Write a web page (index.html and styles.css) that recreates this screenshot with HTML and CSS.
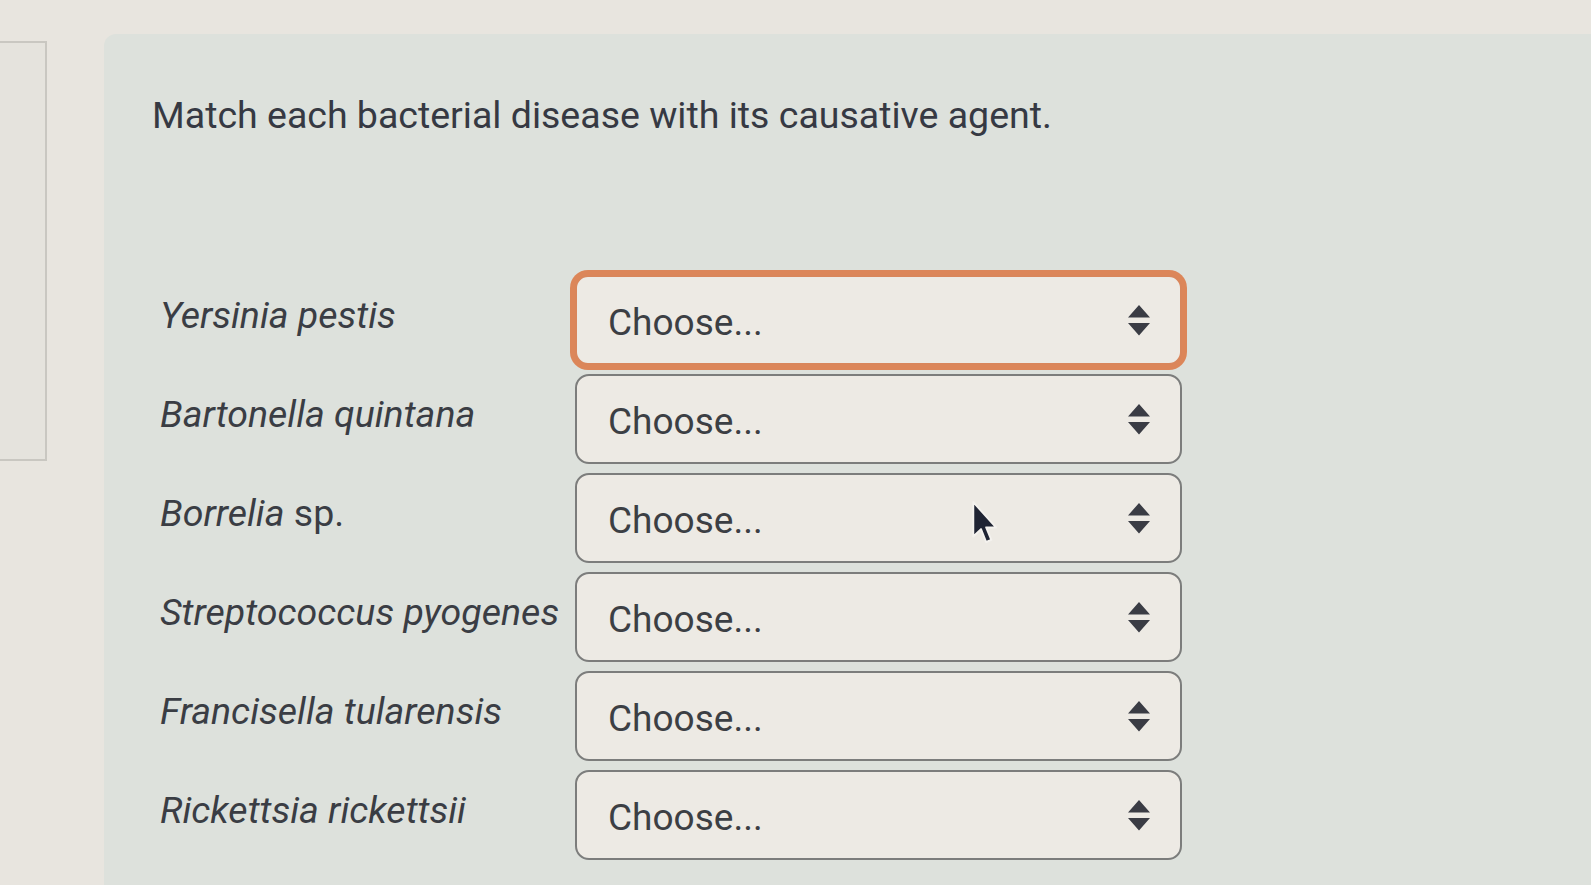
FILE: index.html
```html
<!DOCTYPE html>
<html lang="en">

<head>
    <meta charset="UTF-8">
    <meta name="viewport" content="width=device-width, initial-scale=1.0">
    <title>Matching question</title>
    <link rel="stylesheet" href="styles.css">
</head>

<body>
    <div class="side-panel"></div>
    <div class="question-card">
        <h2 class="question-text">Match each bacterial disease with its causative agent.</h2>
        <div class="match-list">
            <div class="match-row">
                <p class="match-label"><em>Yersinia pestis</em></p>
                <div class="select-box focused">
                    <span>Choose...</span>
                    <svg class="select-arrows" width="22" height="31" viewBox="0 0 22 31"><path d="M11 0 L22 12.5 L0 12.5 Z M0 18 L22 18 L11 30.5 Z" fill="#3a3c44"/></svg>
                </div>
            </div>
            <div class="match-row">
                <p class="match-label"><em>Bartonella quintana</em></p>
                <div class="select-box">
                    <span>Choose...</span>
                    <svg class="select-arrows" width="22" height="31" viewBox="0 0 22 31"><path d="M11 0 L22 12.5 L0 12.5 Z M0 18 L22 18 L11 30.5 Z" fill="#3a3c44"/></svg>
                </div>
            </div>
            <div class="match-row">
                <p class="match-label"><em>Borrelia</em> sp.</p>
                <div class="select-box">
                    <span>Choose...</span>
                    <svg class="select-arrows" width="22" height="31" viewBox="0 0 22 31"><path d="M11 0 L22 12.5 L0 12.5 Z M0 18 L22 18 L11 30.5 Z" fill="#3a3c44"/></svg>
                    <svg class="mouse-cursor" width="26" height="45" viewBox="0 0 12 21"><path d="M1 1 L1 17 L4.6 13.6 L7 19.6 L9.4 18.6 L7 12.8 L11.6 12.8 Z" fill="#1f2433" stroke="#f4f2ee" stroke-width="0.9" stroke-linejoin="round"/></svg>
                </div>
            </div>
            <div class="match-row">
                <p class="match-label"><em>Streptococcus pyogenes</em></p>
                <div class="select-box">
                    <span>Choose...</span>
                    <svg class="select-arrows" width="22" height="31" viewBox="0 0 22 31"><path d="M11 0 L22 12.5 L0 12.5 Z M0 18 L22 18 L11 30.5 Z" fill="#3a3c44"/></svg>
                </div>
            </div>
            <div class="match-row">
                <p class="match-label"><em>Francisella tularensis</em></p>
                <div class="select-box">
                    <span>Choose...</span>
                    <svg class="select-arrows" width="22" height="31" viewBox="0 0 22 31"><path d="M11 0 L22 12.5 L0 12.5 Z M0 18 L22 18 L11 30.5 Z" fill="#3a3c44"/></svg>
                </div>
            </div>
            <div class="match-row">
                <p class="match-label"><em>Rickettsia rickettsii</em></p>
                <div class="select-box">
                    <span>Choose...</span>
                    <svg class="select-arrows" width="22" height="31" viewBox="0 0 22 31"><path d="M11 0 L22 12.5 L0 12.5 Z M0 18 L22 18 L11 30.5 Z" fill="#3a3c44"/></svg>
                </div>
            </div>
        </div>
    </div>
</body>

</html>
```

FILE: styles.css
```css
html,
body {
    height: 100%;
}

body {
    margin: 0;
    background-color: #e8e5df;
    font-family: Roboto, "Liberation Sans", sans-serif;
    color: #3a3d45;
    display: flex;
    align-items: flex-start;
    gap: 57px;
    padding-top: 34px;
    box-sizing: border-box;
    overflow: hidden;
}

p,
h2 {
    margin: 0px;
}

.side-panel {
    width: 47px;
    height: 420px;
    margin-top: 7px;
    flex-shrink: 0;
    background-color: #e5e3dd;
    border: 2px solid #c9c7c1;
    border-left: none;
    box-sizing: border-box;
}

.question-card {
    flex: 1;
    height: 900px;
    background-color: #dde1dc;
    border-top-left-radius: 12px;
    padding: 59px 0 0 48px;
    box-sizing: border-box;
}

.question-text {
    font-size: 37.5px;
    font-weight: 400;
    line-height: 45px;
    color: #363943;
}

.match-list {
    display: flex;
    flex-direction: column;
    gap: 9px;
    margin-top: 137px;
}

.match-row {
    display: flex;
    align-items: center;
}

.match-label {
    width: 423px;
    padding-left: 8px;
    padding-bottom: 10px;
    box-sizing: border-box;
    font-size: 37.5px;
    white-space: nowrap;
    color: #3a3d44;
}

.select-box {
    position: relative;
    width: 607px;
    height: 90px;
    display: flex;
    align-items: center;
    justify-content: space-between;
    padding: 0 30px 0 31px;
    box-sizing: border-box;
    background-color: #edeae4;
    border: 2px solid #7c7d7c;
    border-radius: 14px;
    font-size: 37px;
    color: #3c3f44;
}

.select-box.focused {
    border-color: #d9865b;
    box-shadow: 0 0 0 5px #dc8659;
    border-radius: 13px;
}

.select-box span {
    padding-top: 4px;
}

.mouse-cursor {
    position: absolute;
    left: 394px;
    top: 25px;
}
```
